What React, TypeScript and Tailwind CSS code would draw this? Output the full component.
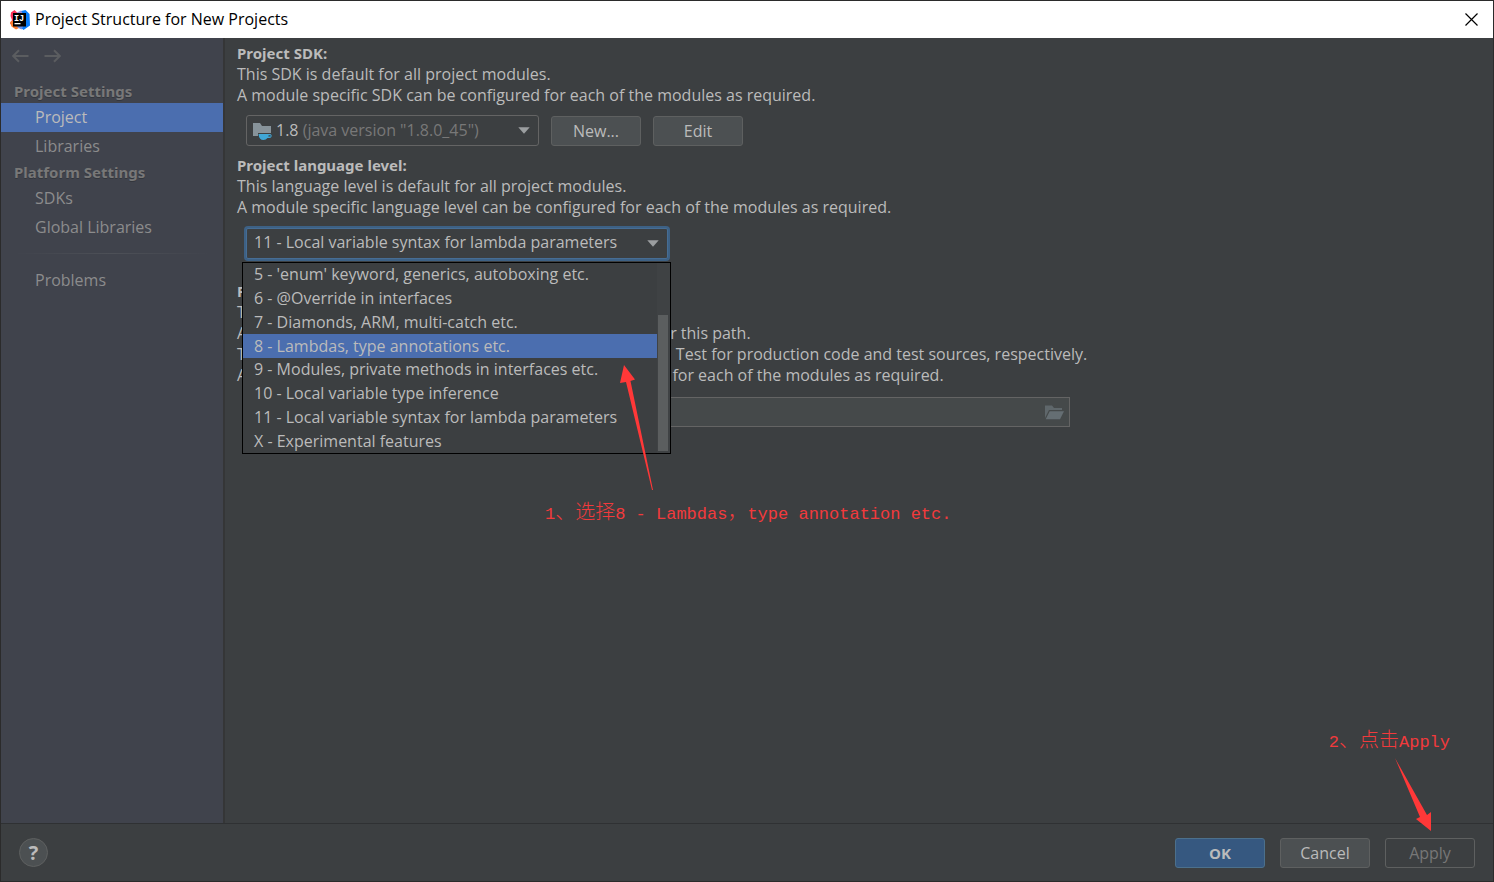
import React from "react";

const LEVELS = [
  "5 - 'enum' keyword, generics, autoboxing etc.",
  "6 - @Override in interfaces",
  "7 - Diamonds, ARM, multi-catch etc.",
  "8 - Lambdas, type annotations etc.",
  "9 - Modules, private methods in interfaces etc.",
  "10 - Local variable type inference",
  "11 - Local variable syntax for lambda parameters",
  "X - Experimental features",
];

function AppLogo() {
  return (
    <svg width="20" height="20" viewBox="0 0 20 20" aria-hidden="true">
      <path d="M1 2.5 4.5 0 7 2.500 8 17 2.5 16 0 13.5 2 10 0.5 6Z" fill="#fc3159" />
      <path d="M0 12 4 10 9 18 6 19.5 1.5 16.5Z" fill="#f97a2b" />
      <path d="M11 1 15.5 0 19.5 4 20 15.5 13.5 20 9 16Z" fill="#087cfa" />
      <path d="M5 15H14L11.5 19.5 8.5 18Z" fill="#6b8fe8" />
      <path d="M7 2.5 11 0.5 13 4H6Z" fill="#9a8fd8" />
      <rect x="3" y="3" width="13" height="13.5" fill="#000" />
      <text x="4" y="10.5" fill="#fff" fontFamily="Liberation Mono" fontWeight="700" fontSize="8.5">
        IJ
      </text>
      <rect x="4.5" y="13" width="6" height="1.300" fill="#fff" />
    </svg>
  );
}

function NavArrow({ forward = false }: { forward?: boolean }) {
  return (
    <svg width="17" height="14" viewBox="0 0 17 14" fill="none" stroke="#5b5d60" strokeWidth="2" aria-hidden="true">
      {forward ? <path d="M0.5 7H16M10 1.2 15.8 7 10 12.8" /> : <path d="M16.5 7H1M7 1.2 1.2 7 7 12.8" />}
    </svg>
  );
}

function Caret() {
  return (
    <svg width="12" height="7" viewBox="0 0 12 7" className="pointer-events-none" aria-hidden="true">
      <path d="M0.3 0.3H11.7L6 6.7Z" fill="#9b9ea0" />
    </svg>
  );
}

function JdkIcon() {
  return (
    <svg width="20" height="19" viewBox="0 0 20 19" aria-hidden="true">
      <path d="M0 2H7L9 5H18V12H5V15H0Z" fill="#87939a" />
      <path d="M5.500 13H17C19.3 13 19.300 17 16.3 17H14.5Q13 19 10.5 19 6 19 5.5 13Z" fill="#40a7d6" />
      <path d="M15.600 14.200H17.600V15.600H15.300Z" fill="#3c3f41" />
    </svg>
  );
}

function FolderOpenIcon() {
  return (
    <svg width="19" height="15" viewBox="0 0 19 15" aria-hidden="true">
      <path d="M0 0.5H7L9 3H17V5H4L0 13Z" fill="#5f676b" />
      <path d="M4.7 6.3H19L15 14.3H0.7Z" fill="#656e73" />
    </svg>
  );
}

function SideLink({ children, active = false }: { children: React.ReactNode; active?: boolean }) {
  return (
    <a
      href="#"
      aria-current={active ? "page" : undefined}
      className={
        active
          ? "flex h-[29px] items-center bg-[#4b6eaf] pl-[34px] text-[#bbbbbb]"
          : "flex h-[29px] items-center pl-[34px] text-[#8c8c8c]"
      }
    >
      {children}
    </a>
  );
}

const STRONG = "font-['Noto_Sans',sans-serif] text-[15px] font-bold leading-[21px]";

function SideHeading({ children }: { children: React.ReactNode }) {
  return (
    <h2 className={`${STRONG} flex h-[23px] items-center pl-[13px] text-[#787878] [text-shadow:0_1px_0_#33363c]`}>
      {children}
    </h2>
  );
}

const BUTTON = "h-[30px] w-[90px] rounded-[3px] border pt-0.5 text-center";
const NOTE = "font-['Liberation_Mono','Noto_Sans_CJK_SC',monospace] text-[17px] leading-[21px] whitespace-nowrap";
const HAN = "text-[20px] font-light";

export default function App() {
  return (
    <div className="relative flex min-h-screen flex-col border border-[#2b2b2b] bg-[#3c3f41] font-['Open_Sans','Noto_Sans',sans-serif] text-[16px] leading-[21px] text-[#bbbbbb]">
      <header className="flex h-[37px] items-center bg-white pr-[15px] pl-[9px] text-black">
        <AppLogo />
        <h1 className="ml-[5px] flex-1">Project Structure for New Projects</h1>
        <button aria-label="Close">
          <svg width="13" height="13" viewBox="0 0 13 13" stroke="#000" strokeWidth="1.2" aria-hidden="true">
            <path d="M0.5 0.5 12.5 12.5M12.5 0.5 0.5 12.5" />
          </svg>
        </button>
      </header>

      <div className="flex flex-1">
        <nav className="w-[224px] shrink-0 border-r-2 border-[#353637] bg-[#40434c]">
          <div className="flex h-[42px] items-start gap-[15px] pt-[11px] pl-[11px]">
            <button aria-label="Back">
              <NavArrow />
            </button>
            <button aria-label="Forward">
              <NavArrow forward />
            </button>
          </div>
          <SideHeading>Project Settings</SideHeading>
          <SideLink active>Project</SideLink>
          <SideLink>Libraries</SideLink>
          <SideHeading>Platform Settings</SideHeading>
          <SideLink>SDKs</SideLink>
          <SideLink>Global Libraries</SideLink>
          <div className="mx-[13px] mt-[11px] mb-3 h-px bg-linear-to-r from-transparent via-[#4d5057] to-transparent" />
          <SideLink>Problems</SideLink>
        </nav>

        <main className="relative min-w-0 flex-1 pt-[5px] pl-3">
          <section>
            <h3 className={STRONG}>Project SDK:</h3>
            <p>This SDK is default for all project modules.</p>
            <p>A module specific SDK can be configured for each of the modules as required.</p>
            <div className="mt-[9px] flex items-center gap-3 pl-[9px]">
              <div className="relative flex h-[31px] w-[293px] items-center rounded-[3px] border border-[#646464] pr-2 pl-[6px]">
                <JdkIcon />
                <span className="ml-[3px] flex-1 whitespace-pre">
                  1.8 <span className="text-[#787878]">(java version "1.8.0_45")</span>
                </span>
                <Caret />
                <select aria-label="Project SDK" className="absolute inset-0 opacity-0">
                  <option>1.8 (java version "1.8.0_45")</option>
                </select>
              </div>
              <button className={`${BUTTON} border-[#5e6060] bg-[#4c5052]`}>New...</button>
              <button className={`${BUTTON} border-[#5e6060] bg-[#4c5052]`}>Edit</button>
            </div>
          </section>

          <section className="mt-[9px]">
            <h3 className={STRONG}>
              <label htmlFor="level">Project language level:</label>
            </h3>
            <p>This language level is default for all project modules.</p>
            <p>A module specific language level can be configured for each of the modules as required.</p>
            <div className="relative mt-[10px] ml-[9px] flex w-[422px] items-center">
              <select
                id="level"
                defaultValue={LEVELS[6]}
                className="h-[31px] w-full appearance-none rounded-[2px] border border-[#466d94] bg-[#3c3f41] pb-[2px] pl-[7px] ring-2 ring-[#3d6185] outline-none"
              >
                {LEVELS.map((level) => (
                  <option key={level}>{level}</option>
                ))}
              </select>
              <span className="pointer-events-none absolute right-[9px]">
                <Caret />
              </span>
              <div className="absolute top-[34px] -left-1 z-10 flex h-[192px] w-[429px] border border-black bg-[#3c3f41]">
                <ul role="listbox" aria-label="Language levels" className="flex flex-1 flex-col">
                  {LEVELS.map((level, i) => (
                    <li
                      key={level}
                      role="option"
                      aria-selected={i === 3}
                      className={
                        i === 3 ? "flex flex-1 items-center bg-[#4b6eaf] pl-[11px]" : "flex flex-1 items-center pl-[11px]"
                      }
                    >
                      {level}
                    </li>
                  ))}
                </ul>
                <div className="flex w-[13px] flex-col bg-[#3f4244] px-px pt-[52px] pb-[2px]">
                  <div className="w-[10px] flex-1 bg-[#5b5e5f]" />
                </div>
              </div>
            </div>
          </section>

          <section className="mt-[22px]">
            <h3 className={STRONG}>
              <label htmlFor="output">Project compiler output:</label>
            </h3>
            <p>This path is used to store all project compilation results.</p>
            <p>A directory corresponding to each module is created under this path.</p>
            <p>
              This directory contains two subdirectories: Production and Test for production code and test sources,
              respectively.
            </p>
            <p>A module specific compiler output path can be configured for each of the modules as required.</p>
            <div className="mt-[11px] ml-[9px] flex h-[30px] w-[824px] items-center border border-[#646464] bg-[#45494a] pr-[5px]">
              <input id="output" type="text" className="min-w-0 flex-1 px-2 outline-none" />
              <button aria-label="Browse">
                <FolderOpenIcon />
              </button>
            </div>
          </section>

          <div className="absolute top-[326px] left-[320px] z-20 text-[#f23a3c]">
            <svg width="120" height="128" viewBox="545 364 120 128" aria-hidden="true">
              <path d="M624 365 635 379.500 630.500 381 653 490 652 490 626 382 620 383Z" fill="#ff3838" />
            </svg>
            <p className={`${NOTE} mt-[11px]`}>
              1<span className={HAN}>、选择</span>8 - Lambdas<span className={HAN}>，</span>type annotation etc.
            </p>
          </div>
        </main>
      </div>

      <footer className="relative flex h-[58px] items-center gap-[15px] border-t border-[#2f3133] pr-[18px] pl-[18px]">
        <button
          aria-label="Help"
          className="mr-auto flex size-[29px] items-center justify-center rounded-full border border-[#5e6060] bg-[#4c5052] text-[20px] font-bold"
        >
          ?
        </button>
        <button className={`${BUTTON} border-[#4c708c] bg-[#365880] text-[15px] font-bold`}>OK</button>
        <button className={`${BUTTON} border-[#5e6060] bg-[#4c5052]`}>Cancel</button>
        <button disabled className={`${BUTTON} border-[#5e6060] text-[#777777]`}>
          Apply
        </button>
        <div className="absolute right-[43px] bottom-[48px] z-20 text-[#f23a3c]">
          <p className={NOTE}>
            2<span className={HAN}>、点击</span>Apply
          </p>
          <svg width="120" height="80" viewBox="1329 753 120 80" aria-hidden="true">
            <path d="M1395 758 1427 815 1431 812 1431 831 1416 819 1420 817Z" fill="#ff3838" />
          </svg>
        </div>
      </footer>
    </div>
  );
}
